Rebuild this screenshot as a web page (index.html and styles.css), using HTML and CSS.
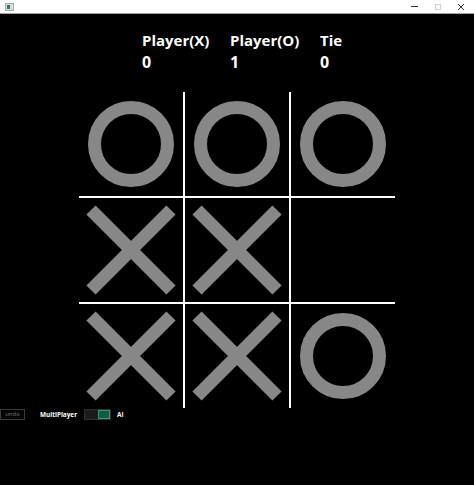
FILE: index.html
```html
<!DOCTYPE html>
<html lang="en">

<head>
  <meta charset="UTF-8" />
  <meta name="viewport" content="width=device-width, initial-scale=1.0" />
  <title>Tic Tac Toe</title>
  <link rel="stylesheet" href="styles.css">
</head>

<body>
  <svg width="0" height="0" class="defs">
    <symbol id="mark-o" viewBox="0 0 104 104">
      <circle cx="52" cy="52" r="36.5" fill="none" stroke="currentColor" stroke-width="13" />
    </symbol>
    <symbol id="mark-x" viewBox="0 0 104 104">
      <line x1="12" y1="12" x2="92" y2="92" stroke="currentColor" stroke-width="13" />
      <line x1="92" y1="12" x2="12" y2="92" stroke="currentColor" stroke-width="13" />
    </symbol>
  </svg>

  <div class="titlebar">
    <svg class="app-icon" width="9" height="8" viewBox="0 0 9 8">
      <rect x="0.5" y="0.5" width="8" height="7" fill="#d5dfdc" stroke="#9fb2ad" />
      <rect x="2" y="2" width="3" height="4" fill="#4d6b63" />
    </svg>
    <div class="caption-buttons">
      <span class="caption-btn">
        <svg width="7" height="7" viewBox="0 0 7 7"><line x1="0" y1="3.5" x2="7" y2="3.5" stroke="#333" /></svg>
      </span>
      <span class="caption-btn">
        <svg width="6" height="6" viewBox="0 0 6 6"><rect x="0.5" y="0.5" width="5" height="5" fill="none" stroke="#cfcfcf" /></svg>
      </span>
      <span class="caption-btn">
        <svg width="6" height="6" viewBox="0 0 6 6"><path d="M0 0L6 6M6 0L0 6" stroke="#333" /></svg>
      </span>
    </div>
  </div>

  <div class="game">
    <div class="scores">
      <div class="score"><span class="label">Player(X)</span><span class="value">0</span></div>
      <div class="score"><span class="label">Player(O)</span><span class="value">1</span></div>
      <div class="score"><span class="label">Tie</span><span class="value">0</span></div>
    </div>

    <div class="board">
      <div class="cell"><svg class="mark"><use href="#mark-o" /></svg></div>
      <div class="cell"><svg class="mark"><use href="#mark-o" /></svg></div>
      <div class="cell"><svg class="mark"><use href="#mark-o" /></svg></div>
      <div class="cell"><svg class="mark"><use href="#mark-x" /></svg></div>
      <div class="cell"><svg class="mark"><use href="#mark-x" /></svg></div>
      <div class="cell"></div>
      <div class="cell"><svg class="mark"><use href="#mark-x" /></svg></div>
      <div class="cell"><svg class="mark"><use href="#mark-x" /></svg></div>
      <div class="cell"><svg class="mark"><use href="#mark-o" /></svg></div>
    </div>

    <div class="controls">
      <button class="undo">undo</button>
      <span class="mode-label">MultiPlayer</span>
      <span class="toggle"><span class="knob"></span></span>
      <span class="mode-label">AI</span>
    </div>
  </div>
</body>

</html>
```

FILE: styles.css
```css
:root {
  --mark-color: #878787;
  --line-color: #ffffff;
  --text-main: #ffffff;
}

* {
  box-sizing: border-box;
}

html,
body {
  height: 100%;
}

body {
  margin: 0;
  background: #000;
  color: var(--text-main);
  font-family: "Open Sans", "Noto Sans", sans-serif;
  overflow: hidden;
}

.defs {
  position: absolute;
}

/* Window caption */
.titlebar {
  height: 14px;
  background: #fff;
  border-bottom: 1px solid #a3a3a3;
  display: flex;
  align-items: flex-start;
  padding-left: 5px;
}

.app-icon {
  display: block;
  margin-top: 3px;
}

.caption-buttons {
  margin-left: auto;
  margin-right: 2px;
  display: flex;
}

.caption-btn {
  width: 23px;
  height: 13px;
  display: flex;
  align-items: center;
  justify-content: center;
}

.caption-btn svg {
  display: block;
}

/* Scores */
.scores {
  display: grid;
  grid-template-columns: 88px 90px auto;
  padding: 15px 0 0 142px;
}

.score {
  display: flex;
  flex-direction: column;
}

.label {
  font-size: 15px;
  font-weight: 700;
  line-height: 22px;
}

.value {
  font-size: 16px;
  font-weight: 700;
  line-height: 22px;
}

/* Board */
.board {
  width: 316px;
  margin: 19px auto 0;
  display: grid;
  grid-template-columns: repeat(3, 104px);
  grid-template-rows: repeat(3, 104px);
  gap: 2px;
  background: var(--line-color);
}

.cell {
  background: #000;
  color: var(--mark-color);
}

.mark {
  display: block;
  width: 104px;
  height: 104px;
}

/* Bottom controls */
.controls {
  display: flex;
  align-items: center;
  height: 12px;
}

.undo {
  width: 25px;
  height: 11px;
  padding: 0;
  margin: 0 15px 0 0;
  background: #050505;
  border: 1px solid #3a3a3a;
  color: #6f6f6f;
  font-family: inherit;
  font-size: 6px;
  line-height: 9px;
}

.mode-label {
  font-size: 6.4px;
  font-weight: 700;
}

.toggle {
  width: 27px;
  height: 11px;
  margin: 0 6px 0 7px;
  background: #1a1d1c;
  border: 1px solid #2c2f2e;
  display: flex;
  justify-content: flex-end;
}

.knob {
  width: 12px;
  height: 9px;
  background: #0c5d45;
  border: 1px solid #4a9079;
}
```
